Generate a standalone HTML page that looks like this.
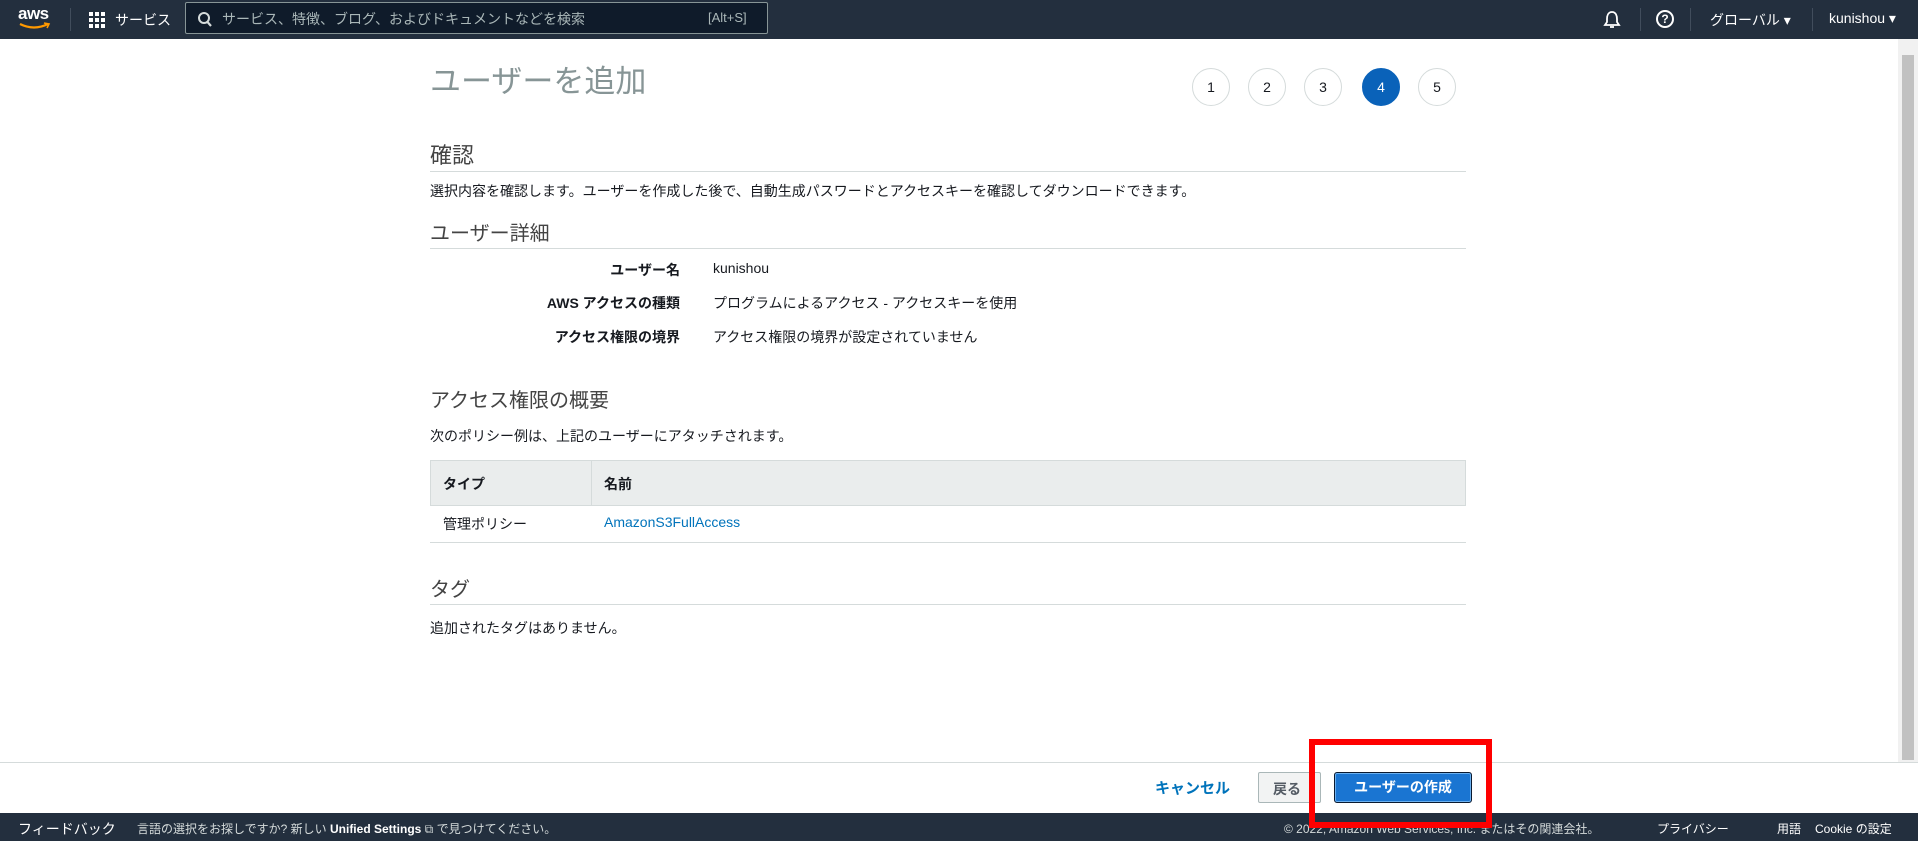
<!DOCTYPE html>
<html><head><meta charset="utf-8"><style>
*{margin:0;padding:0;box-sizing:border-box}
body{width:1918px;height:841px;overflow:hidden;background:#fff;font-family:"Liberation Sans","Noto Sans CJK JP",sans-serif;color:#16191f;font-size:14px;position:relative}
.a{position:absolute;white-space:nowrap}
.top{position:absolute;left:0;top:0;width:1918px;height:39px;background:#232f3e;color:#fff}
.foot{position:absolute;left:0;top:813px;width:1918px;height:28px;background:#232f3e;color:#fff;font-size:13px}
.line{position:absolute;left:430px;width:1036px;height:1px;background:#d5dbdb}
.circ{position:absolute;top:68px;width:38px;height:38px;border-radius:50%;border:1px solid #d5dbdb;text-align:center;line-height:36px;font-size:14px;color:#16191f}
.h{font-size:20px;color:#444}
.lbl{font-weight:bold;text-align:right;width:250px;left:430px}
</style></head><body>
<div class="top">
 <div class="a" style="left:18px;top:4px;font-size:17px;font-weight:bold;letter-spacing:-0.5px">aws</div>
 <svg class="a" style="left:18px;top:22px" width="34" height="8"><path d="M2 2 Q16 9 30 2" stroke="#f90" stroke-width="2.2" fill="none"/><path d="M26 1 L31 2 L29 6" stroke="#f90" stroke-width="1.6" fill="none"/></svg>
 <div class="a" style="left:70px;top:8px;width:1px;height:23px;background:#414d5c"></div>
 <svg class="a" style="left:89px;top:12px" width="16" height="16" fill="#fff"><rect x="0" y="0" width="4" height="4"/><rect x="6" y="0" width="4" height="4"/><rect x="12" y="0" width="4" height="4"/><rect x="0" y="6" width="4" height="4"/><rect x="6" y="6" width="4" height="4"/><rect x="12" y="6" width="4" height="4"/><rect x="0" y="12" width="4" height="4"/><rect x="6" y="12" width="4" height="4"/><rect x="12" y="12" width="4" height="4"/></svg>
 <div class="a" style="left:115px;top:10px;font-size:14px">サービス</div>
 <div class="a" style="left:185px;top:2px;width:583px;height:32px;background:#0f1b2a;border:1px solid #879596;border-radius:2px"></div>
 <svg class="a" style="left:197px;top:11px" width="16" height="17"><circle cx="7" cy="7" r="5" stroke="#d5dbdb" stroke-width="2" fill="none"/><path d="M10.5 11 L14 15" stroke="#d5dbdb" stroke-width="2.2"/></svg>
 <div class="a" style="left:222px;top:9px;font-size:14px;color:#aab7b8">サービス、特徴、ブログ、およびドキュメントなどを検索</div>
 <div class="a" style="left:708px;top:10px;font-size:13px;color:#aab7b8">[Alt+S]</div>
 <svg class="a" style="left:1603px;top:10px" width="18" height="19"><path d="M9 2 C5 2 4 6 4 9 L4 12 L2 15 L16 15 L14 12 L14 9 C14 6 13 2 9 2Z" stroke="#fff" stroke-width="1.8" fill="none"/><path d="M7 17 L11 17" stroke="#fff" stroke-width="1.8"/></svg>
 <div class="a" style="left:1640px;top:8px;width:1px;height:23px;background:#414d5c"></div>
 <div class="a" style="left:1656px;top:10px;width:18px;height:18px;border:2px solid #fff;border-radius:50%;font-size:12px;font-weight:bold;text-align:center;line-height:14px">?</div>
 <div class="a" style="left:1690px;top:8px;width:1px;height:23px;background:#414d5c"></div>
 <div class="a" style="left:1710px;top:10px;font-size:14px">グローバル ▾</div>
 <div class="a" style="left:1812px;top:8px;width:1px;height:23px;background:#414d5c"></div>
 <div class="a" style="left:1829px;top:10px;font-size:14px">kunishou ▾</div>
</div>
<div class="a" style="left:1898px;top:39px;width:20px;height:723px;background:#f1f1f1"></div>
<div class="a" style="left:1902px;top:55px;width:12px;height:705px;background:#c1c1c1"></div>

<div class="a" style="left:430px;top:56px;font-size:31px;color:#879596">ユーザーを追加</div>
<div class="circ" style="left:1192px">1</div>
<div class="circ" style="left:1248px">2</div>
<div class="circ" style="left:1304px">3</div>
<div class="circ" style="left:1362px;background:#0a62b9;border-color:#0a62b9;color:#fff">4</div>
<div class="circ" style="left:1418px">5</div>

<div class="a h" style="left:430px;top:138px;font-size:22px">確認</div>
<div class="line" style="top:171px"></div>
<div class="a" style="left:430px;top:181px">選択内容を確認します。ユーザーを作成した後で、自動生成パスワードとアクセスキーを確認してダウンロードできます。</div>
<div class="a h" style="left:430px;top:217px">ユーザー詳細</div>
<div class="line" style="top:248px"></div>
<div class="a lbl" style="top:260px">ユーザー名</div><div class="a" style="left:713px;top:260px">kunishou</div>
<div class="a lbl" style="top:293px">AWS アクセスの種類</div><div class="a" style="left:713px;top:293px">プログラムによるアクセス - アクセスキーを使用</div>
<div class="a lbl" style="top:327px">アクセス権限の境界</div><div class="a" style="left:713px;top:327px">アクセス権限の境界が設定されていません</div>
<div class="a h" style="left:430px;top:384px">アクセス権限の概要</div>
<div class="a" style="left:430px;top:426px">次のポリシー例は、上記のユーザーにアタッチされます。</div>
<div class="a" style="left:430px;top:460px;width:1036px;height:46px;background:#eaeded;border:1px solid #d5dbdb"></div>
<div class="a" style="left:591px;top:460px;width:1px;height:46px;background:#d5dbdb"></div>
<div class="a" style="left:443px;top:474px;font-weight:bold">タイプ</div>
<div class="a" style="left:604px;top:474px;font-weight:bold">名前</div>
<div class="a" style="left:443px;top:514px">管理ポリシー</div>
<div class="a" style="left:604px;top:514px;color:#0073bb">AmazonS3FullAccess</div>
<div class="line" style="top:542px"></div>
<div class="a h" style="left:430px;top:573px">タグ</div>
<div class="line" style="top:604px"></div>
<div class="a" style="left:430px;top:618px">追加されたタグはありません。</div>

<div class="a" style="left:0;top:762px;width:1918px;height:1px;background:#d5dbdb"></div>
<div class="a" style="left:1155px;top:777px;font-weight:bold;color:#0073bb;font-size:15px">キャンセル</div>
<div class="a" style="left:1258px;top:772px;width:63px;height:31px;border:1px solid #aab7b8;border-radius:2px;background:#f2f3f3;font-weight:bold;color:#545b64;padding:6px 0 0 14px">戻る</div>
<div class="a" style="left:1334px;top:772px;width:138px;height:31px;border:1px solid #0a1a30;border-radius:3px;background:#1a75d2;box-shadow:inset 0 0 0 1px #6ab0f0;color:#fff;font-weight:bold;text-align:center;line-height:29px">ユーザーの作成</div>
<div class="a" style="left:1309px;top:739px;width:183px;height:89px;border:6px solid #f00"></div>

<div class="foot">
 <div class="a" style="left:18px;top:6px;font-size:14px">フィードバック</div>
 <div class="a" style="left:137px;top:7px;font-size:12px;color:#d5dbdb">言語の選択をお探しですか? 新しい <b style="color:#fff">Unified Settings</b> ⧉ で見つけてください。</div>
 <div class="a" style="left:1284px;top:7px;font-size:12px;color:#d5dbdb">© 2022, Amazon Web Services, Inc. またはその関連会社。</div>
 <div class="a" style="left:1657px;top:7px;font-size:12px">プライバシー</div>
 <div class="a" style="left:1777px;top:7px;font-size:12px">用語</div>
 <div class="a" style="left:1815px;top:7px;font-size:12px">Cookie の設定</div>
</div>
<div class="a" style="left:1309px;top:813px;width:183px;height:15px;border:6px solid #f00;border-top:none"></div>
</body></html>
